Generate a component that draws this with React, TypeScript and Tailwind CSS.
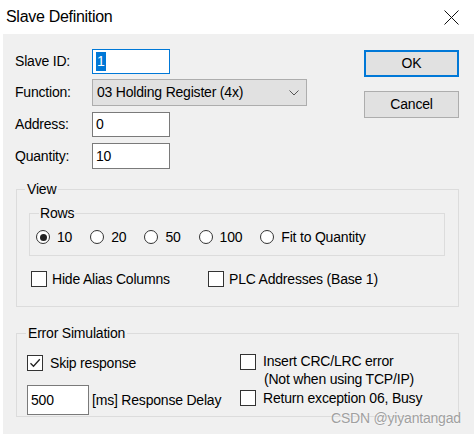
import React from "react";

const font = { fontFamily: '"Liberation Sans", Arial, sans-serif' };

function Radio({ label, checked }: { label: string; checked?: boolean }) {
  return (
    <div className="flex items-center gap-[7px]">
      <div className="w-[14px] h-[14px] rounded-full border border-[#333] bg-white flex items-center justify-center">
        {checked && <div className="w-[7px] h-[7px] rounded-full bg-[#222]" />}
      </div>
      <span>{label}</span>
    </div>
  );
}

function Check({ checked }: { checked?: boolean }) {
  return (
    <div className="w-[16px] h-[16px] shrink-0 border border-[#333] bg-white flex items-center justify-center">
      {checked && (
        <svg width="12" height="12" viewBox="0 0 12 12">
          <path d="M1.5 6.2 L4.5 9.2 L10.8 2.2" fill="none" stroke="#222" strokeWidth="1.3" />
        </svg>
      )}
    </div>
  );
}

export default function App() {
  return (
    <div
      className="w-[474px] h-[437px] bg-white text-[14px] tracking-[-0.2px] text-black relative overflow-hidden"
      style={font}
    >
      <div className="h-[34px] flex items-center justify-between pl-[6px] pr-[15px]">
        <span className="text-[16px] tracking-[-0.3px]">Slave Definition</span>
        <svg width="15" height="15" viewBox="0 0 15 15">
          <path d="M0.5 0.5 L14.5 14.5 M14.5 0.5 L0.5 14.5" stroke="#111" strokeWidth="1" />
        </svg>
      </div>
      <div className="ml-[3px] h-[400px] bg-[#f0f0f0] pl-[13px] pr-[15px]">
        <div className="flex justify-between pt-[15px]">
          <div className="flex flex-col -ml-[1px]">
            <div className="flex items-center h-[25px]">
              <span className="w-[77px]">Slave ID:</span>
              <div className="w-[78px] h-[25px] border border-[#0078d7] bg-white flex items-center pl-[3px]">
                <span className="bg-[#0078d7] text-white leading-[19px] px-[1px]">1</span>
              </div>
            </div>
            <div className="flex items-center h-[27px] mt-[5px]">
              <span className="w-[77px]">Function:</span>
              <div className="w-[215px] h-[27px] border border-[#adadad] bg-[#e1e1e1] flex items-center justify-between pl-[4px] pr-[7px]">
                <span>03 Holding Register (4x)</span>
                <svg width="10" height="6" viewBox="0 0 10 6">
                  <path d="M0.5 0.5 L5 5 L9.5 0.5" fill="none" stroke="#555" strokeWidth="1" />
                </svg>
              </div>
            </div>
            <div className="flex items-center h-[25px] mt-[6px]">
              <span className="w-[77px]">Address:</span>
              <div className="w-[78px] h-[25px] border border-[#7a7a7a] bg-white flex items-center pl-[3px]">
                0
              </div>
            </div>
            <div className="flex items-center h-[26px] mt-[6px]">
              <span className="w-[77px]">Quantity:</span>
              <div className="w-[78px] h-[26px] border border-[#7a7a7a] bg-white flex items-center pl-[3px]">
                10
              </div>
            </div>
          </div>
          <div className="flex flex-col mt-[1px]">
            <div className="w-[95px] h-[27px] border-2 border-[#0078d7] bg-[#e1e1e1] flex items-center justify-center">
              OK
            </div>
            <div className="w-[95px] h-[27px] mt-[14px] border border-[#adadad] bg-[#e1e1e1] flex items-center justify-center">
              Cancel
            </div>
          </div>
        </div>

        <fieldset className="mt-[12px] border border-[#dcdcdc]">
          <legend className="ml-[8px] px-[2px] leading-[16px]">View</legend>
          <div className="pl-[12px] pr-[13px] pt-[8px] pb-[19px]">
            <fieldset className="border border-[#dcdcdc]">
              <legend className="ml-[9px] px-[1px] leading-[16px]">Rows</legend>
              <div className="pl-[6px] pt-[8px] pb-[10px]">
                <div className="flex items-center gap-[18px] h-[16px]">
                  <Radio label="10" checked />
                  <Radio label="20" />
                  <Radio label="50" />
                  <Radio label="100" />
                  <Radio label="Fit to Quantity" />
                </div>
              </div>
            </fieldset>
            <div className="flex items-center mt-[15px] h-[16px] pl-[2px]">
              <div className="flex items-center gap-[5px] w-[177px]">
                <Check />
                <span>Hide Alias Columns</span>
              </div>
              <div className="flex items-center gap-[5px]">
                <Check />
                <span>PLC Addresses (Base 1)</span>
              </div>
            </div>
          </div>
        </fieldset>

        <fieldset className="mt-[18px] border border-[#dcdcdc]">
          <legend className="ml-[9px] px-[2px] leading-[16px]">Error Simulation</legend>
          <div className="flex pl-[10px] pb-[1px]">
            <div className="flex flex-col w-[213px] pt-[14px]">
              <div className="flex items-center gap-[7px] h-[16px]">
                <Check checked />
                <span>Skip response</span>
              </div>
              <div className="flex items-center mt-[14px]">
                <div className="w-[62px] h-[30px] border border-[#7a7a7a] bg-white flex items-center pl-[3px]">
                  500
                </div>
                <span className="ml-[3px]">[ms] Response Delay</span>
              </div>
            </div>
            <div className="flex flex-col pt-[11px]">
              <div className="flex items-start gap-[7px]">
                <div className="mt-[2px]">
                  <Check />
                </div>
                <div className="leading-[18px]">
                  <div>Insert CRC/LRC error</div>
                  <div className="pl-[1px]">(Not when using TCP/IP)</div>
                </div>
              </div>
              <div className="flex items-center gap-[7px] mt-[1px] h-[18px]">
                <Check />
                <span>Return exception 06, Busy</span>
              </div>
            </div>
          </div>
        </fieldset>
      </div>
      <div className="absolute left-[331px] top-[410px] text-[14px] leading-[16px] text-[#a0a0a0] [text-shadow:0_0_2px_#ffffff]">
        CSDN @yiyantangad
      </div>
    </div>
  );
}
